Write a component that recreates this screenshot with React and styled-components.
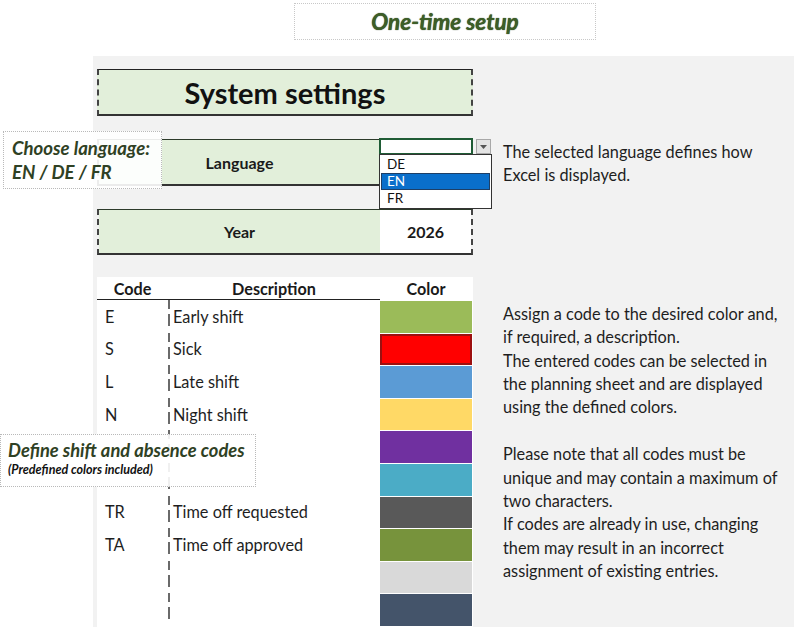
import styled, { createGlobalStyle } from "styled-components";

const GlobalStyle = createGlobalStyle`
  body {
    margin: 0;
    background: #ffffff;
    font-family: Lato, "Open Sans", sans-serif;
    color: #1e1e1e;
  }
`;

const Page = styled.div`
  position: relative;
  width: 794px;
  height: 627px;
  overflow: hidden;
`;

const TopBar = styled.div`
  height: 56px;
  padding: 3px 0 0 294px;
  box-sizing: border-box;
`;

const Banner = styled.div`
  width: 302px;
  height: 37px;
  box-sizing: border-box;
  border: 1px dotted #c8c8c8;
  display: flex;
  align-items: center;
  justify-content: center;
  font-style: italic;
  font-weight: 700;
  font-size: 22.5px;
  color: #3d5e27;
  text-shadow: 0 0 1px #1d2d12;
`;

const Panel = styled.div`
  background: #f2f2f2;
  margin-left: 93px;
  height: 571px;
  padding-left: 4px;
  display: grid;
  grid-template-columns: 376px 1fr;
  column-gap: 30px;
`;

const LeftCol = styled.div`
  display: flex;
  flex-direction: column;
  padding-top: 13px;
`;

const dashedSides = `
  border-left: 2px dashed #444;
  border-right: 2px dashed #444;
`;

const TitleBox = styled.div`
  height: 47px;
  box-sizing: border-box;
  background: #e2efda;
  border-top: 1px solid #222;
  border-bottom: 2px solid #333;
  ${dashedSides}
  display: flex;
  align-items: center;
  justify-content: center;
  font-size: 29px;
  font-weight: 700;
  color: #111;
`;

const FieldBox = styled.div`
  position: relative;
  margin-top: ${(p) => p.$top}px;
  height: ${(p) => p.$height}px;
  box-sizing: border-box;
  border-top: 1px solid #2c3a2a;
  border-bottom: 2px solid #333;
  ${dashedSides}
  display: grid;
  grid-template-columns: 281px 1fr;
`;

const FieldLabel = styled.div`
  background: #e2efda;
  display: flex;
  align-items: center;
  justify-content: center;
  font-size: 16px;
  font-weight: 700;
  color: #1a1a1a;
`;

const FieldValue = styled.div`
  position: relative;
  background: #ffffff;
  display: flex;
  align-items: center;
  justify-content: center;
  font-size: 16px;
  font-weight: 700;
  color: #1a1a1a;
`;

const ActiveCell = styled.div`
  position: absolute;
  left: -1px;
  top: -2px;
  width: 94px;
  height: 17px;
  box-sizing: border-box;
  border: 2px solid #1f5c35;
`;

const ArrowButton = styled.div`
  position: absolute;
  left: 96px;
  top: -1px;
  width: 15px;
  height: 15px;
  box-sizing: border-box;
  background: #e4e4e4;
  border: 1px solid #a8a8a8;
  display: flex;
  align-items: center;
  justify-content: center;
`;

const DropList = styled.ul`
  position: absolute;
  left: -1px;
  top: 14px;
  width: 113px;
  margin: 0;
  padding: 1px 0;
  list-style: none;
  background: #ffffff;
  border: 1px solid #333;
  box-sizing: border-box;
  z-index: 3;
`;

const DropItem = styled.li`
  height: 15px;
  line-height: 15px;
  padding-left: 5px;
  font-size: 13.5px;
  font-weight: 400;
  background: ${(p) => (p.$active ? "#0a6fcb" : "transparent")};
  color: ${(p) => (p.$active ? "#ffffff" : "#111")};
  border: 1px solid ${(p) => (p.$active ? "#1e3f66" : "transparent")};
  margin: 0 1px;
`;

const Table = styled.div`
  margin-top: 22px;
  flex: 1;
  background: #ffffff;
  display: grid;
  grid-template-columns: 71px 212px 92px;
  grid-auto-rows: 32.6px;
  grid-template-rows: 23px;
  align-content: start;
`;

const HeadCell = styled.div`
  display: flex;
  align-items: center;
  justify-content: center;
  font-size: 16.2px;
  font-weight: 700;
  color: #1a1a1a;
  border-bottom: ${(p) => (p.$noLine ? "none" : "1px solid #222")};
`;

const CodeCell = styled.div`
  display: flex;
  align-items: center;
  padding-left: 8px;
  font-size: 16.3px;
`;

const DescCell = styled.div`
  display: flex;
  align-items: center;
  padding-left: 5px;
  font-size: 16.3px;
  background-image: repeating-linear-gradient(
    to bottom,
    #6a6a6a 0 12px,
    transparent 12px 17px
  );
  background-size: 2px 100%;
  background-repeat: no-repeat;
  background-position: 0 ${(p) => p.$shift}px;
`;

const Swatch = styled.div`
  margin-top: 1px;
  box-sizing: border-box;
  background: ${(p) => p.$color};
  border: ${(p) => (p.$edge ? `2px solid ${p.$edge}` : "none")};
`;

const RightCol = styled.div`
  padding-top: 84px;
  font-size: 16.3px;
  line-height: 23.4px;
  color: #1e1e1e;
`;

const Note = styled.p`
  margin: 0 0 ${(p) => p.$after || 0}px 0;
`;

const Callout = styled.div`
  position: absolute;
  left: ${(p) => p.$left}px;
  top: ${(p) => p.$top}px;
  width: ${(p) => p.$width}px;
  height: ${(p) => p.$height}px;
  box-sizing: border-box;
  border: 1px dotted #b9b9b9;
  background: rgba(255, 255, 255, 0.9);
  padding: ${(p) => p.$pad};
  font-style: italic;
  font-weight: 700;
  color: #2f4124;
  z-index: 4;
`;

const CalloutTitle = styled.div`
  font-size: ${(p) => p.$size || 18.6}px;
  line-height: 24px;
`;

const CalloutSub = styled.div`
  font-size: 12.5px;
  line-height: 16px;
  color: #111;
`;

const rows = [
  { code: "E", desc: "Early shift", color: "#9bbb59" },
  { code: "S", desc: "Sick", color: "#ff0000", edge: "#9c1010" },
  { code: "L", desc: "Late shift", color: "#5b9bd5" },
  { code: "N", desc: "Night shift", color: "#ffd966" },
  { code: "", desc: "", color: "#7030a0" },
  { code: "", desc: "", color: "#4bacc6" },
  { code: "TR", desc: "Time off requested", color: "#595959" },
  { code: "TA", desc: "Time off approved", color: "#77933c" },
  { code: "", desc: "", color: "#d9d9d9" },
  { code: "", desc: "", color: "#44546a" },
];

export default function App() {
  return (
    <Page>
      <GlobalStyle />
      <TopBar>
        <Banner>One-time setup</Banner>
      </TopBar>

      <Panel>
        <LeftCol>
          <TitleBox>System settings</TitleBox>

          <FieldBox $top={23} $height={47}>
            <FieldLabel>Language</FieldLabel>
            <FieldValue>
              <ActiveCell />
              <ArrowButton>
                <svg width="7" height="4" viewBox="0 0 7 4">
                  <path d="M0 0h7L3.5 4z" fill="#555" />
                </svg>
              </ArrowButton>
              <DropList>
                <DropItem>DE</DropItem>
                <DropItem $active>EN</DropItem>
                <DropItem>FR</DropItem>
              </DropList>
            </FieldValue>
          </FieldBox>

          <FieldBox $top={23} $height={46}>
            <FieldLabel>Year</FieldLabel>
            <FieldValue>2026</FieldValue>
          </FieldBox>

          <Table>
            <HeadCell>Code</HeadCell>
            <HeadCell>Description</HeadCell>
            <HeadCell $noLine>Color</HeadCell>
            {rows.map((r, i) => [
              <CodeCell key={`c${i}`}>{r.code}</CodeCell>,
              <DescCell key={`d${i}`} $shift={-3}>
                {r.desc}
              </DescCell>,
              <Swatch key={`s${i}`} $color={r.color} $edge={r.edge} />,
            ])}
          </Table>
        </LeftCol>

        <RightCol>
          <Note $after={115}>
            The selected language defines how
            <br />
            Excel is displayed.
          </Note>
          <Note $after={23.4}>
            Assign a code to the desired color and,
            <br />
            if required, a description.
            <br />
            The entered codes can be selected in
            <br />
            the planning sheet and are displayed
            <br />
            using the defined colors.
          </Note>
          <Note>
            Please note that all codes must be
            <br />
            unique and may contain a maximum of
            <br />
            two characters.
            <br />
            If codes are already in use, changing
            <br />
            them may result in an incorrect
            <br />
            assignment of existing entries.
          </Note>
        </RightCol>
      </Panel>

      <Callout $left={3} $top={131} $width={159} $height={58} $pad="4px 8px">
        <CalloutTitle>Choose language:</CalloutTitle>
        <CalloutTitle>EN / DE / FR</CalloutTitle>
      </Callout>

      <Callout $left={0} $top={434} $width={256} $height={53} $pad="3px 7px">
        <CalloutTitle $size={18.3}>Define shift and absence codes</CalloutTitle>
        <CalloutSub>(Predefined colors included)</CalloutSub>
      </Callout>
    </Page>
  );
}
